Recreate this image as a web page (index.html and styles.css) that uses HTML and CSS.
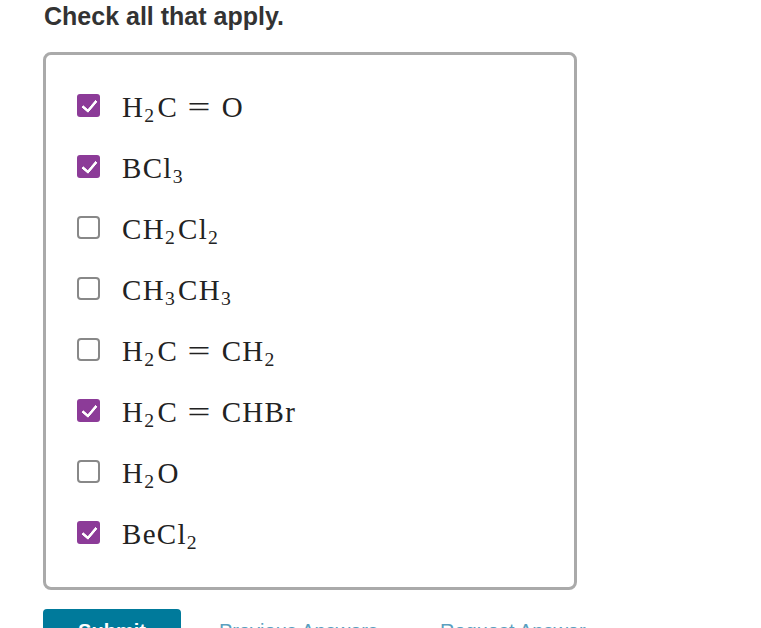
FILE: index.html
```html
<!DOCTYPE html>
<html>
<head>
  <title>Check all that apply</title>
  <link rel="stylesheet" href="styles.css">
</head>
<body>
  <div class="question">
    <h1 class="prompt">Check all that apply.</h1>

    <!-- answer choices -->
    <div class="choices">
      <label class="choice">
        <span class="box checked"></span>
        <span class="formula">H<sub>2</sub>C<span class="rel">=</span>O</span>
      </label>
      <label class="choice">
        <span class="box checked"></span>
        <span class="formula">BCl<sub>3</sub></span>
      </label>
      <label class="choice">
        <span class="box"></span>
        <span class="formula">CH<sub>2</sub>Cl<sub>2</sub></span>
      </label>
      <label class="choice">
        <span class="box"></span>
        <span class="formula">CH<sub>3</sub>CH<sub>3</sub></span>
      </label>
      <label class="choice">
        <span class="box"></span>
        <span class="formula">H<sub>2</sub>C<span class="rel">=</span>CH<sub>2</sub></span>
      </label>
      <label class="choice">
        <span class="box checked"></span>
        <span class="formula">H<sub>2</sub>C<span class="rel">=</span>CHBr</span>
      </label>
      <label class="choice">
        <span class="box"></span>
        <span class="formula">H<sub>2</sub>O</span>
      </label>
      <label class="choice">
        <span class="box checked"></span>
        <span class="formula">BeCl<sub>2</sub></span>
      </label>
    </div>

    <div class="actions">
      <button class="submit">Submit</button>
      <a class="link" href="#">Previous Answers</a>
      <a class="link" href="#">Request Answer</a>
    </div>
  </div>
</body>
</html>
```

FILE: styles.css
```css
body {
  margin: 0;
  background: #fff;
  color: #333;
  font-family: "Liberation Sans", Arial, sans-serif;
}

.question {
  padding: 2px 0 0 43px;
}

.prompt {
  margin: 0 0 22px 1px;
  font-size: 25px;
  line-height: 28px;
  font-weight: bold;
  color: #333;
}

.choices {
  box-sizing: border-box;
  width: 534px;
  border: 3px solid #aaa;
  border-radius: 8px;
  padding: 20px 0 24px 31px;
}

.choice {
  display: flex;
  align-items: center;
  height: 61px;
  gap: 22px;
}

.box {
  flex: 0 0 auto;
  box-sizing: border-box;
  width: 23px;
  height: 23px;
  border: 2px solid #888;
  border-radius: 4px;
  background: #fff;
  position: relative;
}

.box.checked {
  border: none;
  border-radius: 3px;
  background: #8c3b98;
}

.box.checked::after {
  content: "";
  position: absolute;
  left: 8px;
  top: 3px;
  width: 6px;
  height: 12px;
  border: solid #fff;
  border-width: 0 3.5px 3.5px 0;
  border-radius: 1px;
  transform: rotate(40deg);
}

.formula {
  font-family: "Liberation Serif", "Times New Roman", serif;
  font-size: 29px;
  letter-spacing: 1.3px;
  color: #222;
  line-height: 1;
  padding-top: 3px;
}

.formula sub {
  font-size: 0.68em;
  line-height: 0;
  vertical-align: -0.3em;
  margin-right: 2px;
}

.rel {
  display: inline-block;
  margin: 0 13px;
  transform: scaleX(1.4);
}

.actions {
  display: flex;
  align-items: center;
  margin-top: 19px;
}

.submit {
  width: 138px;
  height: 44px;
  margin-right: 38px;
  border: none;
  border-radius: 4px;
  background: #007a9b;
  color: #fff;
  font-family: "Liberation Sans", Arial, sans-serif;
  font-size: 20px;
  font-weight: bold;
}

.link {
  color: #5a9fc0;
  font-size: 20px;
  text-decoration: none;
  margin-right: 62px;
}
```
